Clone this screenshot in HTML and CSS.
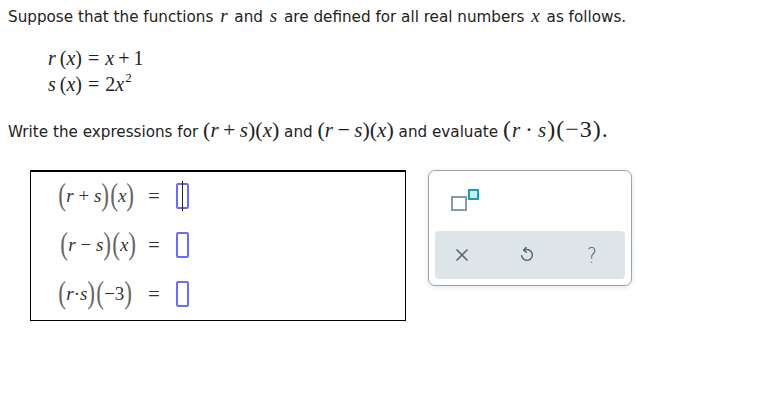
FILE: index.html
```html
<!DOCTYPE html>
<html lang="en">
<head>
  <meta charset="UTF-8">
  <title>Sum, difference and product of functions</title>
  <link rel="stylesheet" href="styles.css">
</head>
<body>

  <div id="page">

    <p class="line first">Suppose that the functions <i class="v">r</i> and <i class="v">s</i> are defined for all real numbers <i class="v">x</i> as follows.</p>

    <div class="defs">
      <div class="def"><i>r</i>&thinsp;(<i>x</i>) = <i>x</i>&thinsp;+&thinsp;1</div>
      <div class="def"><i>s</i>&thinsp;(<i>x</i>) = 2<i>x</i><sup>2</sup></div>
    </div>

    <p class="line task">Write the expressions for <span class="m">(<i>r</i>&thinsp;+&thinsp;<i>s</i>)(<i>x</i>)</span> and <span class="m">(<i>r</i>&thinsp;&minus;&thinsp;<i>s</i>)(<i>x</i>)</span> and evaluate <span class="m last">(<i>r</i><span class="dot">&middot;</span><i>s</i>)(&minus;3).</span></p>

    <div class="work">

      <div class="answers">
        <div class="row">
          <span class="expr"><span class="p">(</span><i>r</i> + <i>s</i><span class="p">)</span><span class="p">(</span><i>x</i><span class="p">)</span></span>
          <span class="eq">=</span>
          <span class="slot active"></span>
        </div>
        <div class="row">
          <span class="expr shift"><span class="p">(</span><i>r</i> &minus; <i>s</i><span class="p">)</span><span class="p">(</span><i>x</i><span class="p">)</span></span>
          <span class="eq">=</span>
          <span class="slot"></span>
        </div>
        <div class="row">
          <span class="expr"><span class="p">(</span><i>r</i>&middot;<i>s</i><span class="p">)</span><span class="p">(</span>&minus;3<span class="p">)</span></span>
          <span class="eq">=</span>
          <span class="slot"></span>
        </div>
      </div>

      <div class="tools">
        <div class="exp-btn">
          <span class="base"></span>
          <span class="power"></span>
        </div>
        <div class="actions">
          <button class="act" title="Clear">
            <svg width="14" height="14" viewBox="0 0 14 14"><path d="M1.5 1.5 L12.5 12.5 M12.5 1.5 L1.5 12.5" stroke="#4d6673" stroke-width="1.5" fill="none"/></svg>
          </button>
          <button class="act" title="Undo">
            <svg width="16" height="18" viewBox="0 0 16 18"><path d="M7 1.5 L4.6 4.3 L7.4 6.3" stroke="#4d6673" stroke-width="1.4" fill="none" stroke-linecap="round" stroke-linejoin="round"/><path d="M5 4.4 A5.4 5.4 0 1 1 2.6 9.6" stroke="#4d6673" stroke-width="1.4" fill="none" stroke-linecap="round"/></svg>
          </button>
          <button class="act q" title="Help">?</button>
        </div>
      </div>

    </div>

  </div>

</body>
</html>
```

FILE: styles.css
```css
body {
  margin: 0;
  background-color: #fff;
  font-family: 'DejaVu Sans', Verdana, sans-serif;
  color: #222;
}

#page {
  padding: 5px 0 0 8px;
}

.line {
  margin: 0;
  font-size: 15.2px;
  line-height: 22px;
}

.v, .m, .defs, .answers {
  font-family: "Liberation Serif", serif;
}

.v {
  font-size: 19px;
  padding: 0 2px;
}

.m {
  font-size: 22px;
}

.m i {
  font-size: 21px;
}

.m.last {
  font-size: 24px;
  letter-spacing: 1px;
}

.dot {
  padding: 0 4px;
}

.defs {
  margin: 17px 0 0 40px;
  font-size: 20px;
  line-height: 26px;
  color: #222;
  word-spacing: 1px;
}

.defs sup {
  font-size: 13px;
  vertical-align: 9px;
  line-height: 0;
  margin-left: 1px;
}

.task {
  margin-top: 21px;
}

.work {
  display: flex;
  align-items: flex-start;
  gap: 22px;
  margin: 27px 0 0 22px;
}

/* answer area */

.answers {
  width: 376px;
  height: 151px;
  border: 1px solid #000;
  border-top-width: 2px;
  padding: 8px 0 0 27px;
  box-sizing: border-box;
  display: flex;
  flex-direction: column;
  gap: 17px;
  color: #333;
}

.row {
  display: flex;
  align-items: center;
  height: 32px;
  font-size: 19px;
}

.expr {
  flex: none;
  width: 90px;
  white-space: nowrap;
}

.expr.shift {
  padding-left: 2px;
  width: 88px;
}

.expr .p {
  display: inline-block;
  font-size: 31px;
  color: #666;
  transform: scaleX(0.75);
  vertical-align: -3px;
  line-height: 20px;
  margin: 0 -1px;
}

.eq {
  flex: none;
  font-size: 21px;
  width: 28px;
}

.slot {
  width: 13px;
  height: 26px;
  border: 2px solid #6b6bff;
  border-radius: 2px;
  box-sizing: border-box;
}

.slot.active {
  position: relative;
}

.slot.active::after {
  content: "";
  position: absolute;
  left: 4px;
  top: -4px;
  width: 1px;
  height: 30px;
  background-color: #222;
}

/* tool panel */

.tools {
  width: 204px;
  height: 116px;
  border: 1px solid #93a5ad;
  border-radius: 7px;
  box-shadow: 0 1px 5px rgba(0, 0, 0, 0.12);
  box-sizing: border-box;
  padding: 0 6px 6px;
  display: flex;
  flex-direction: column;
}

.exp-btn {
  position: relative;
  height: 60px;
}

.base {
  position: absolute;
  left: 16px;
  top: 25px;
  width: 16px;
  height: 15px;
  border: 2px solid #8a9ca5;
  box-sizing: border-box;
}

.power {
  position: absolute;
  left: 33px;
  top: 18px;
  width: 11px;
  height: 11px;
  border: 2px solid #14a0b6;
  background-color: #c9eef4;
  box-sizing: border-box;
}

.actions {
  flex: 1;
  background-color: #dee5e8;
  border-radius: 4px;
  display: flex;
  align-items: center;
  gap: 35px;
  padding: 0 0 0 12px;
}

.act {
  background: none;
  border: none;
  padding: 0;
  width: 30px;
  height: 30px;
  display: flex;
  align-items: center;
  justify-content: center;
  cursor: pointer;
}

.act.q {
  font-family: 'DejaVu Sans', sans-serif;
  font-size: 22px;
  font-weight: 300;
  color: #4d6673;
  transform: scaleX(0.85);
}
```
